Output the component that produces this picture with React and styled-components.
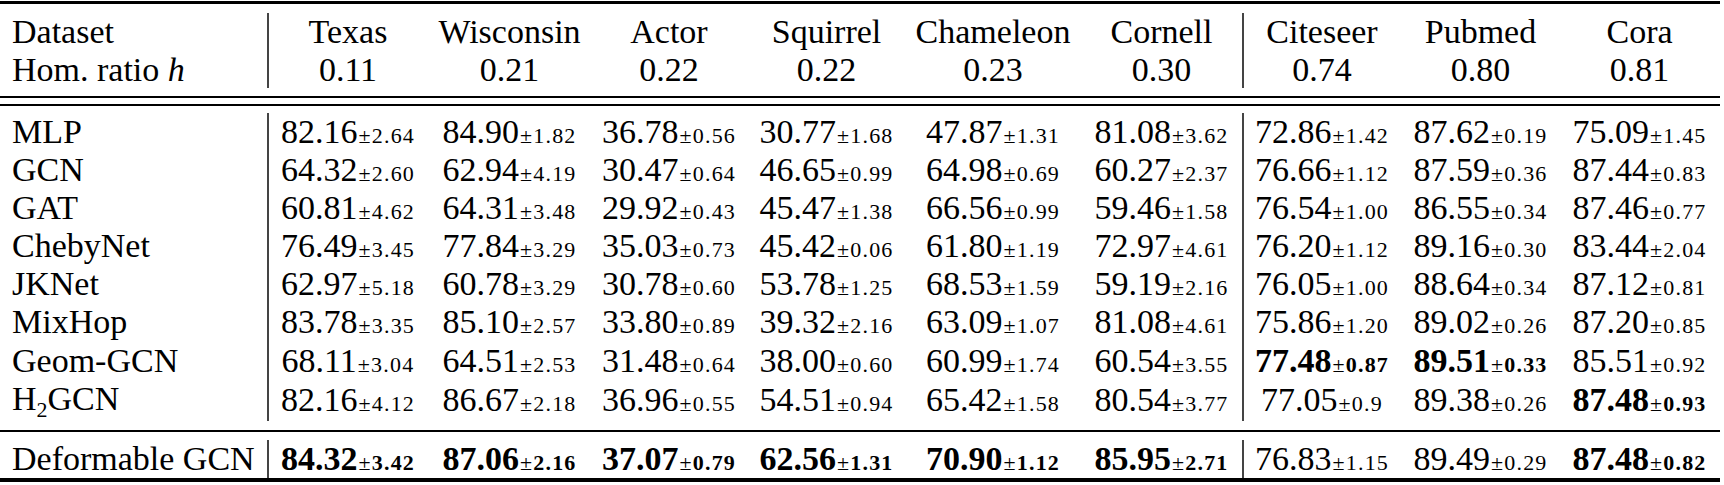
import React from 'react';
import styled, { createGlobalStyle } from 'styled-components';

const GlobalStyle = createGlobalStyle`
  html, body {
    margin: 0;
    padding: 0;
    background: #fff;
  }
  body {
    font-family: "Liberation Serif", "Times New Roman", serif;
    color: #000;
  }
`;

const Page = styled.div`
  width: 1724px;
  padding-top: 1px;
`;

const Table = styled.table`
  width: 1720px;
  table-layout: fixed;
  border-collapse: separate;
  border-spacing: 0;
  font-family: "Liberation Serif", "Times New Roman", serif;
  font-size: 34px;
  color: #000;
`;

const Col = styled.col`
  width: ${p => p.$w}px;
`;

const RuleCell = styled.td`
  padding: ${p => p.$above}px 0 ${p => p.$below}px;
  line-height: 0;
  font-size: 0;
`;

const Line = styled.div`
  height: ${p => p.$weight}px;
  background: #000;
`;

const Cell = styled.td`
  height: ${p => p.$h}px;
  line-height: ${p => p.$h}px;
  padding: 0 0 0 ${p => (p.$left ? 12 : 0)}px;
  text-align: ${p => (p.$left ? 'left' : 'center')};
  white-space: nowrap;
  font-family: "Liberation Serif", "Times New Roman", serif;
  box-shadow: ${p => (p.$divider ? 'inset 2px 0 0 #444' : 'none')};
`;

const Var = styled.i`
  font-style: italic;
`;

const Sub = styled.sub`
  font-size: 22px;
  line-height: 1;
  vertical-align: -7px;
`;

const Big = styled.span`
  font-weight: ${p => (p.$bold ? 700 : 400)};
`;

const Small = styled.span`
  font-size: 22px;
  line-height: 1;
  letter-spacing: 1.2px;
  font-weight: ${p => (p.$bold ? 700 : 400)};
`;

const Pm = styled.span`
  font-weight: 400;
  margin-left: 1px;
`;

const widths = [267, 162, 161, 158, 157, 176, 161, 160, 157, 161];
const dividers = [1, 7];

const datasets = ['Texas', 'Wisconsin', 'Actor', 'Squirrel', 'Chameleon', 'Cornell', 'Citeseer', 'Pubmed', 'Cora'];
const ratios = ['0.11', '0.21', '0.22', '0.22', '0.23', '0.30', '0.74', '0.80', '0.81'];

// "*" in front marks the best result (bold)
const baselines = [
  ['MLP', '82.16 2.64', '84.90 1.82', '36.78 0.56', '30.77 1.68', '47.87 1.31', '81.08 3.62', '72.86 1.42', '87.62 0.19', '75.09 1.45'],
  ['GCN', '64.32 2.60', '62.94 4.19', '30.47 0.64', '46.65 0.99', '64.98 0.69', '60.27 2.37', '76.66 1.12', '87.59 0.36', '87.44 0.83'],
  ['GAT', '60.81 4.62', '64.31 3.48', '29.92 0.43', '45.47 1.38', '66.56 0.99', '59.46 1.58', '76.54 1.00', '86.55 0.34', '87.46 0.77'],
  ['ChebyNet', '76.49 3.45', '77.84 3.29', '35.03 0.73', '45.42 0.06', '61.80 1.19', '72.97 4.61', '76.20 1.12', '89.16 0.30', '83.44 2.04'],
  ['JKNet', '62.97 5.18', '60.78 3.29', '30.78 0.60', '53.78 1.25', '68.53 1.59', '59.19 2.16', '76.05 1.00', '88.64 0.34', '87.12 0.81'],
  ['MixHop', '83.78 3.35', '85.10 2.57', '33.80 0.89', '39.32 2.16', '63.09 1.07', '81.08 4.61', '75.86 1.20', '89.02 0.26', '87.20 0.85'],
  ['Geom-GCN', '68.11 3.04', '64.51 2.53', '31.48 0.64', '38.00 0.60', '60.99 1.74', '60.54 3.55', '*77.48 0.87', '*89.51 0.33', '85.51 0.92'],
  ['H2GCN', '82.16 4.12', '86.67 2.18', '36.96 0.55', '54.51 0.94', '65.42 1.58', '80.54 3.77', '77.05 0.9', '89.38 0.26', '*87.48 0.93'],
];

const ours = ['Deformable GCN', '*84.32 3.42', '*87.06 2.16', '*37.07 0.79', '*62.56 1.31', '*70.90 1.12', '*85.95 2.71', '76.83 1.15', '89.49 0.29', '*87.48 0.82'];

const Rule = ({ weight, above = 0, below = 0 }) => (
  <tr>
    <RuleCell colSpan={10} $above={above} $below={below}>
      <Line $weight={weight} />
    </RuleCell>
  </tr>
);

const Score = ({ value }) => {
  const bold = value.startsWith('*');
  const [mean, std] = value.replace('*', '').split(' ');
  return (
    <>
      <Big $bold={bold}>{mean}</Big>
      <Small $bold={bold}>
        <Pm>±</Pm>
        {std}
      </Small>
    </>
  );
};

const Name = ({ name }) =>
  name === 'H2GCN' ? (
    <>
      H<Sub>2</Sub>GCN
    </>
  ) : (
    name
  );

const DataRow = ({ row, h }) => (
  <tr>
    <Cell $left $h={h}>
      <Name name={row[0]} />
    </Cell>
    {row.slice(1).map((v, i) => (
      <Cell key={i} $h={h} $divider={dividers.includes(i + 1)}>
        <Score value={v} />
      </Cell>
    ))}
  </tr>
);

export default function App() {
  return (
    <Page>
      <GlobalStyle />
      <Table>
        <colgroup>
          {widths.map((w, i) => (
            <Col key={i} $w={w} />
          ))}
        </colgroup>
        <tbody>
          <Rule weight={3} below={9} />
          <tr>
            <Cell $left $h={37.5}>Dataset</Cell>
            {datasets.map((d, i) => (
              <Cell key={d} $h={37.5} $divider={dividers.includes(i + 1)}>
                {d}
              </Cell>
            ))}
          </tr>
          <tr>
            <Cell $left $h={37.5}>
              Hom. ratio <Var>h</Var>
            </Cell>
            {ratios.map((r, i) => (
              <Cell key={i} $h={37.5} $divider={dividers.includes(i + 1)}>
                {r}
              </Cell>
            ))}
          </tr>
          <Rule weight={2} above={8} below={6} />
          <Rule weight={2} below={7} />
          {baselines.map(row => (
            <DataRow key={row[0]} row={row} h={38.1} />
          ))}
          <Rule weight={2} above={9} below={8} />
          <DataRow row={ours} h={38} />
          <Rule weight={4} />
        </tbody>
      </Table>
    </Page>
  );
}
